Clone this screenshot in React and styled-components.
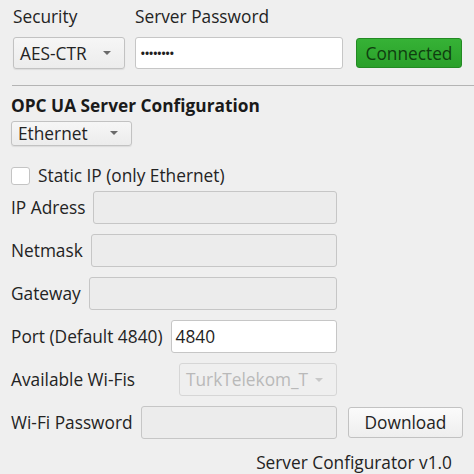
import styled, { createGlobalStyle } from "styled-components";

const Global = createGlobalStyle`
  html, body {
    margin: 0;
    padding: 0;
    background: #efefef;
  }
  body {
    font-family: "Open Sans", "Noto Sans", sans-serif;
    font-size: 17.3px;
    color: #232323;
  }
`;

function Arrow({ disabled }) {
  return (
    <svg width="10" height="6" viewBox="0 0 10 6">
      <path d="M1 1 L5 5 L9 1 Z" fill={disabled ? "#c8c8c8" : "#6a6a6a"} />
    </svg>
  );
}

function App() {
  return (
    <Wrapper>
      <Global />
      <TopGrid>
        <TopLabel>Security</TopLabel>
        <TopLabel>Server Password</TopLabel>
        <span />
        <Combo width="112px" height="32px">
          AES-CTR
          <Arrow />
        </Combo>
        <Field white height="32px">••••••••</Field>
        <StatusButton>Connected</StatusButton>
      </TopGrid>

      <Separator />

      <Heading>OPC UA Server Configuration</Heading>
      <Combo width="121px" height="30px">
        Ethernet
        <Arrow />
      </Combo>

      <CheckRow>
        <Box />
        Static IP (only Ethernet)
      </CheckRow>

      <Form>
        <Row>
          <RowMain>
            <Label>IP Adress</Label>
            <Field />
          </RowMain>
        </Row>
        <Row>
          <RowMain>
            <Label>Netmask</Label>
            <Field />
          </RowMain>
        </Row>
        <Row>
          <RowMain>
            <Label>Gateway</Label>
            <Field />
          </RowMain>
        </Row>
        <Row>
          <RowMain>
            <Label>Port (Default 4840)</Label>
            <Field white>4840</Field>
          </RowMain>
        </Row>
        <Row>
          <RowMain>
            <Label>Available Wi-Fis</Label>
            <Combo width="158px" height="33px" disabled>
              TurkTelekom_T
              <Arrow disabled />
            </Combo>
          </RowMain>
        </Row>
        <Row>
          <RowMain>
            <Label>Wi-Fi Password</Label>
            <Field />
          </RowMain>
          <PlainButton>Download</PlainButton>
        </Row>
      </Form>

      <Footer>Server Configurator v1.0</Footer>
    </Wrapper>
  );
}

export default App;

const Wrapper = styled.div`
  width: 474px;
  height: 474px;
  box-sizing: border-box;
  padding: 5px 0 0 11px;
  display: flex;
  flex-direction: column;
  overflow: hidden;
`;

const TopGrid = styled.div`
  display: grid;
  grid-template-columns: 112px 208px 109px;
  column-gap: 10px;
  row-gap: 8px;
  padding-left: 2px;
  align-items: center;
`;

const TopLabel = styled.div`
  line-height: 24px;
  height: 24px;
`;

const Combo = styled.div`
  width: ${(p) => p.width};
  height: ${(p) => p.height};
  box-sizing: border-box;
  margin-left: ${(p) => (p.disabled ? "auto" : "0")};
  display: flex;
  align-items: center;
  justify-content: space-between;
  padding: 0 12px 0 6px;
  border: 1px solid ${(p) => (p.disabled ? "#d6d6d6" : "#c2c2c2")};
  border-radius: 3px;
  background: ${(p) => (p.disabled ? "#efefef" : "linear-gradient(#f6f6f6, #ececec)")};
  color: ${(p) => (p.disabled ? "#b9b9b9" : "#232323")};
  box-shadow: ${(p) => (p.disabled ? "none" : "0 1px 1px rgba(0,0,0,0.08)")};
`;

const Field = styled.div`
  flex: 1;
  height: ${(p) => p.height || "33px"};
  box-sizing: border-box;
  display: flex;
  align-items: center;
  padding: 0 4px;
  border: 1px solid #c6c6c6;
  border-radius: 3px;
  background: ${(p) => (p.white ? "#ffffff" : "#ececec")};
  color: #1f1f1f;
  letter-spacing: ${(p) => (p.height ? "-1.5px" : "0")};
  font-size: ${(p) => (p.height ? "15px" : "inherit")};
`;

const StatusButton = styled.div`
  height: 30px;
  margin-left: 3px;
  box-sizing: border-box;
  display: flex;
  align-items: center;
  justify-content: center;
  border: 1px solid #238a23;
  border-radius: 3px;
  background: linear-gradient(#36b236, #2aa02a);
  color: #0f3d0f;
`;

const Separator = styled.div`
  height: 1px;
  background: #b4b4b4;
  margin: 16px 0 8px 1px;
`;

const Heading = styled.div`
  font-weight: 700;
  line-height: 24px;
  color: #1a1a1a;
  margin-bottom: 3px;
`;

const CheckRow = styled.div`
  display: flex;
  align-items: center;
  gap: 8px;
  margin-top: 18px;
  line-height: 24px;
`;

const Box = styled.div`
  width: 19px;
  height: 18px;
  box-sizing: border-box;
  border: 1px solid #c4c4c4;
  border-radius: 3px;
  background: #ffffff;
`;

const Form = styled.div`
  display: flex;
  flex-direction: column;
  gap: 10px;
  margin-top: 3px;
`;

const Row = styled.div`
  display: flex;
  align-items: center;
  gap: 11px;
`;

const RowMain = styled.div`
  width: 326px;
  display: flex;
  align-items: center;
  gap: 8px;
`;

const Label = styled.div`
  white-space: nowrap;
`;

const PlainButton = styled.div`
  width: 115px;
  height: 31px;
  box-sizing: border-box;
  display: flex;
  align-items: center;
  justify-content: center;
  border: 1px solid #c2c2c2;
  border-radius: 3px;
  background: linear-gradient(#fbfbfb, #eeeeee);
`;

const Footer = styled.div`
  margin-top: 13px;
  align-self: flex-end;
  padding-right: 22px;
  line-height: 22px;
`;
